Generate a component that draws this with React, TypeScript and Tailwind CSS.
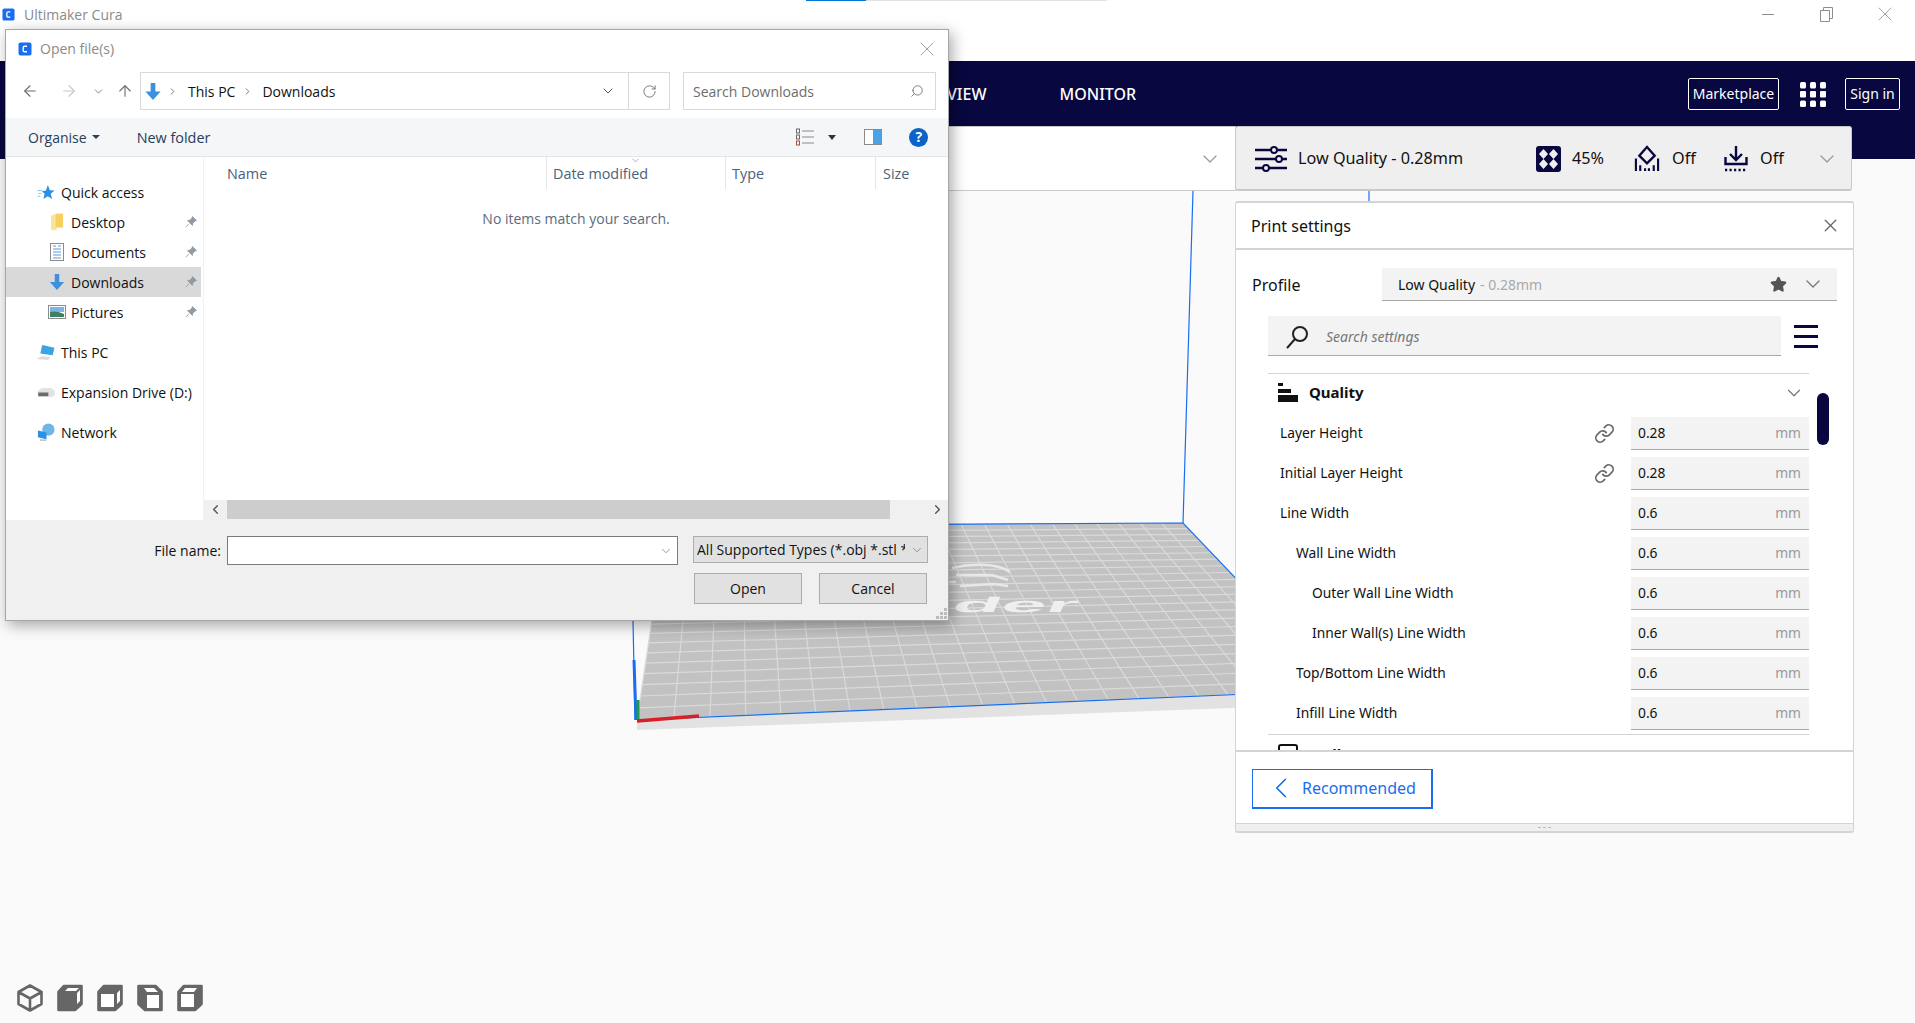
import {
  ArrowLeft,
  ArrowRight,
  ArrowUp,
  ChevronDown,
  ChevronLeft,
  ChevronRight,
  ChevronUp,
  Link,
  RotateCw,
  Search,
  Star,
  X,
} from "lucide-react";

const NAVY = "#08073f";

function CuraLogo({ className }: { className: string }) {
  return (
    <svg viewBox="0 0 14 14" className={className}>
      <rect x="0.5" y="0.5" width="13" height="13" rx="2" fill="#196ef0" />
      <path d="M9 4.2H6.6c-.9 0-1.4.5-1.4 1.3v3c0 .8.5 1.3 1.4 1.3H9" fill="none" stroke="#fff" strokeWidth="1.4" />
    </svg>
  );
}

function DownArrow({ className }: { className: string }) {
  return (
    <svg viewBox="0 0 16 18" className={className}>
      <path d="M5.5 0h5v9H16l-8 9-8-9h5.500z" fill="#3d8fe0" />
    </svg>
  );
}

function Pin() {
  return (
    <svg viewBox="0 0 12 12" className="h-3 w-3 shrink-0">
      <path d="M7.500 0.500 11.500 4.500 10 5 7.800 7.200 7.400 9.500 2.500 4.600 4.800 4.200 7 2z M4 7.800 0.800 11.200" fill="#8f9aa3" stroke="#8f9aa3" strokeWidth="0.8" />
    </svg>
  );
}

function SideIcon({ kind }: { kind: string }) {
  if (kind === "star")
    return (
      <svg viewBox="0 0 18 18" className="h-[17px] w-[18px]">
        <path d="M11 1l2 5.500 5 .3-4 3.500 1.400 5.700-4.600-3-4.600 3 1.400-5.700-3-2.500 4.300-.8z" fill="#2b8fe3" />
        <path d="M0 7h5M1 10h3M0 13h3" stroke="#7cc0ee" strokeWidth="1" />
      </svg>
    );
  if (kind === "folder")
    return (
      <svg viewBox="0 0 14 18" className="h-[18px] w-[13px]">
        <path d="M0 2 6 0v18H2l-2-1z" fill="#fbe39a" />
        <path d="M5 0h8v15H5z" fill="#f7cf63" />
      </svg>
    );
  if (kind === "doc")
    return (
      <svg viewBox="0 0 14 18" className="h-[18px] w-[14px]">
        <rect x="0.500" y="0.500" width="13" height="17" fill="#fff" stroke="#8b8b8b" />
        <path d="M3 3h3M8 3h3M3 6h8M3 9h8M3 12h8M3 15h8" stroke="#5b9bd5" strokeWidth="1" />
      </svg>
    );
  if (kind === "down") return <DownArrow className="h-[16px] w-[16px]" />;
  if (kind === "pic")
    return (
      <svg viewBox="0 0 18 14" className="h-[14px] w-[18px]">
        <rect x="0.500" y="0.500" width="17" height="13" fill="#fff" stroke="#8b8b8b" />
        <rect x="2" y="2" width="14" height="5" fill="#7fb4e6" />
        <path d="M2 7c3-1 8-1 14 2v3H2z" fill="#3f7f64" />
      </svg>
    );
  if (kind === "pc")
    return (
      <svg viewBox="0 0 20 18" className="h-[17px] w-[20px]">
        <path d="M6 1l13 3-2 8-13-2z" fill="#3ba3e6" />
        <path d="M0 16l5-3 10 1-3 3z" fill="#dcdcdc" />
      </svg>
    );
  if (kind === "drive")
    return (
      <svg viewBox="0 0 20 12" className="h-[11px] w-[19px]">
        <path d="M0 5 5 1h10l4 3v5l-3 2H1z" fill="#e2e2e2" />
        <path d="M1 6h11v4H1z" fill="#6b6b6b" />
      </svg>
    );
  return (
    <svg viewBox="0 0 20 20" className="h-[19px] w-[19px]">
      <circle cx="12" cy="7" r="6.500" fill="#6fb6e8" />
      <path d="M1 8l9 2v7l-9-2z" fill="#2b8fe3" />
      <path d="M3 18h7" stroke="#bbb" strokeWidth="1.500" />
    </svg>
  );
}

type SideRow = { label: string; icon: string; pinned?: boolean; selected?: boolean; gap?: string; indent?: boolean };

const sideRows: SideRow[] = [
  { label: "Quick access", icon: "star" },
  { label: "Desktop", icon: "folder", pinned: true, indent: true },
  { label: "Documents", icon: "doc", pinned: true, indent: true },
  { label: "Downloads", icon: "down", pinned: true, selected: true, indent: true },
  { label: "Pictures", icon: "pic", pinned: true, indent: true },
  { label: "This PC", icon: "pc", gap: "mt-[10px]" },
  { label: "Expansion Drive (D:)", icon: "drive", gap: "mt-[10px]" },
  { label: "Network", icon: "net", gap: "mt-[10px]" },
];

function FileDialog() {
  return (
    <div
      className="absolute left-[5px] top-[29px] z-30 flex h-[592px] w-[944px] flex-col border border-[#a6a6a6] bg-white text-[#111] shadow-[3px_4px_14px_rgba(0,0,0,0.35)]"
      style={{ fontFamily: '"Open Sans", sans-serif' }}
    >
      <div className="flex h-[42px] shrink-0 items-center pb-[5px] pl-[12px] pr-[9px]">
        <CuraLogo className="h-[14px] w-[14px]" />
        <span className="ml-[8px] text-[14px] text-[#8a8a8a]">Open file(s)</span>
        <X className="ml-auto h-[24px] w-[24px] text-[#8d8d8d]" strokeWidth={0.8} />
      </div>

      <div className="flex h-[38px] shrink-0 items-center">
        <div className="flex w-[134px] shrink-0 items-center pl-[15px]">
          <ArrowLeft className="h-[18px] w-[18px] text-[#6f6f6f]" strokeWidth={1.500} />
          <ArrowRight className="ml-[21px] h-[18px] w-[18px] text-[#c8c8c8]" strokeWidth={1.500} />
          <ChevronDown className="ml-[14px] h-[13px] w-[13px] text-[#6f6f6f]" strokeWidth={1.500} />
          <ArrowUp className="ml-[11px] h-[18px] w-[18px] text-[#6f6f6f]" strokeWidth={1.500} />
        </div>
        <div className="flex h-[38px] w-[530px] items-center border border-[#d9d9d9] text-[14px]">
          <DownArrow className="ml-[4px] h-[17px] w-[16px]" />
          <ChevronRight className="ml-[6px] h-[11px] w-[11px] text-[#6f6f6f]" />
          <span className="ml-[10px]">This PC</span>
          <ChevronRight className="ml-[7px] h-[11px] w-[11px] text-[#6f6f6f]" />
          <span className="ml-[9px]">Downloads</span>
          <ChevronDown className="ml-auto mr-[12px] h-[16px] w-[16px] text-[#555]" strokeWidth={1.500} />
          <div className="flex h-full w-[41px] items-center justify-center border-l border-[#d9d9d9]">
            <RotateCw className="h-[15px] w-[15px] text-[#6f6f6f]" strokeWidth={1.500} />
          </div>
        </div>
        <div className="ml-[13px] flex h-[38px] w-[253px] items-center border border-[#d9d9d9] pl-[9px] pr-[11px] text-[14px] text-[#6d6d6d]">
          <span>Search Downloads</span>
          <Search className="ml-auto h-[14px] w-[14px] -scale-x-100 text-[#6f6f6f]" strokeWidth={1.500} />
        </div>
      </div>

      <div className="mt-[8px] flex h-[39px] shrink-0 items-center border-b border-[#e5e5e5] bg-[#f5f6f7] pl-[22px] text-[14px] text-[#26405c]">
        <span>Organise</span>
        <span className="ml-[5px] h-0 w-0 border-x-[4px] border-t-[4px] border-x-transparent border-t-[#26405c]" />
        <span className="ml-[37px] pt-[1px] text-[14.400px]">New folder</span>
        <svg viewBox="0 0 18 18" className="ml-[586px] h-[18px] w-[18px]">
          <path d="M6 3h12M6 9h12M6 15h12" stroke="#8a8a8a" strokeWidth="1" />
          <rect x="0.500" y="1" width="3" height="4" fill="none" stroke="#6a6a6a" />
          <rect x="0.500" y="7" width="3" height="4" fill="none" stroke="#6a6a6a" />
          <rect x="0.500" y="13" width="3" height="4" fill="none" stroke="#b04a3a" />
        </svg>
        <span className="ml-[14px] h-0 w-0 border-x-[4px] border-t-[5px] border-x-transparent border-t-[#333]" />
        <svg viewBox="0 0 18 16" className="ml-[28px] h-[16px] w-[18px]">
          <rect x="0.500" y="0.500" width="17" height="15" fill="#fff" stroke="#8a8a8a" />
          <rect x="9" y="1" width="8" height="14" fill="#4aa3e6" />
        </svg>
        <div className="ml-[27px] flex h-[19px] w-[19px] items-center justify-center rounded-full bg-[#0a63c9] text-[14px] font-bold leading-none text-white">
          ?
        </div>
      </div>

      <div className="flex min-h-0 flex-1">
        <div className="w-[198px] shrink-0 border-r border-[#f2f2f2] pr-[2px] pt-[20px] text-[14px]">
          {sideRows.map((r) => (
            <div key={r.label} className={`flex h-[30px] items-center ${r.gap ?? ""} ${r.selected ? "bg-[#d9d9d9]" : ""}`}>
              <div className={`flex w-[24px] shrink-0 justify-center ${r.indent ? "ml-[39px]" : "ml-[28px]"}`}>
                <SideIcon kind={r.icon} />
              </div>
              <span className={`${r.indent ? "ml-[2px]" : "ml-[3px]"} whitespace-nowrap`}>{r.label}</span>
              {r.pinned && <span className="ml-auto mr-[4px]"><Pin /></span>}
            </div>
          ))}
        </div>
        <div className="flex min-w-0 flex-1 flex-col">
          <div className="relative flex h-[32px] shrink-0 text-[14.400px] text-[#4c607a]">
            <div className="w-[342px] pl-[23px] pt-[6px]">Name</div>
            <div className="w-[179px] border-l border-[#e5e5e5] pl-[6px] pt-[6px]">Date modified</div>
            <div className="w-[150px] border-l border-[#e5e5e5] pl-[6px] pt-[6px]">Type</div>
            <div className="flex-1 border-l border-[#e5e5e5] pl-[7px] pt-[6px]">Size</div>
            <ChevronUp className="absolute left-[426px] top-[-2px] h-[11px] w-[11px] rotate-180 text-[#6f6f6f]" strokeWidth={1.200} />
          </div>
          <div className="flex-1 pt-[19px] text-center text-[14px] text-[#5a6b80]">No items match your search.</div>
          <div className="flex h-[20px] shrink-0 items-center bg-[#f0f0f0] pb-[1px]">
            <ChevronLeft className="ml-[4px] h-[15px] w-[15px] text-[#505050]" strokeWidth={2} />
            <div className="ml-[4px] h-[19px] w-[663px] bg-[#cdcdcd]" />
            <ChevronRight className="ml-auto mr-[3px] h-[15px] w-[15px] text-[#505050]" strokeWidth={2} />
          </div>
        </div>
      </div>

      <div className="relative h-[100px] shrink-0 bg-[#f0f0f0] pt-[16px] text-[14px]">
        <div className="flex items-start">
          <label className="flex h-[29px] w-[215px] items-center justify-end">File name:</label>
          <div className="ml-[6px] flex h-[29px] w-[451px] items-center border border-[#7a7a7a] bg-white">
            <ChevronDown className="ml-auto mr-[4px] h-[14px] w-[14px] text-[#555]" strokeWidth={1} />
          </div>
          <div className="ml-[15px] flex h-[27px] w-[235px] items-center border border-[#adadad] bg-[#e1e1e1] pl-[3px]">
            <span className="w-[208px] overflow-hidden whitespace-nowrap">All Supported Types (*.obj *.stl *.3mf)</span>
            <ChevronDown className="ml-[5px] h-[14px] w-[14px] text-[#555]" strokeWidth={1} />
          </div>
        </div>
        <div className="mt-[8px] flex justify-end gap-[17px] pr-[21px]">
          <button className="h-[31px] w-[108px] border border-[#adadad] bg-[#e1e1e1]">Open</button>
          <button className="h-[31px] w-[108px] border border-[#adadad] bg-[#e1e1e1]">Cancel</button>
        </div>
        <svg viewBox="0 0 11 11" className="absolute bottom-[1px] right-[1px] h-[11px] w-[11px]">
          <path d="M8 0h3v3H8zM4 4h3v3H4zM8 4h3v3H8zM0 8h3v3H0zM4 8h3v3H4zM8 8h3v3H8z" fill="#bcbcbc" />
        </svg>
      </div>
    </div>
  );
}

// perspective map from the unit square to the four plate corners
function plateMapper() {
  const [x0, y0, x1, y1, x2, y2, x3, y3] = [637, 720, 1342, 690, 1183, 523, 666, 526];
  const dx1 = x1 - x2, dx2 = x3 - x2, sx = x0 - x1 + x2 - x3;
  const dy1 = y1 - y2, dy2 = y3 - y2, sy = y0 - y1 + y2 - y3;
  const det = dx1 * dy2 - dx2 * dy1;
  const g = (sx * dy2 - dx2 * sy) / det;
  const h = (dx1 * sy - sx * dy1) / det;
  const a = x1 - x0 + g * x1, b = x3 - x0 + h * x3;
  const d = y1 - y0 + g * y1, e = y3 - y0 + h * y3;
  return (u: number, v: number) => {
    const w = g * u + h * v + 1;
    return [(a * u + b * v + x0) / w, (d * u + e * v + y0) / w];
  };
}

function BuildPlate() {
  const map = plateMapper();
  const cells = Array.from({ length: 23 }, (_, i) => i / 22);
  return (
    <svg viewBox="0 0 1915 1023" className="absolute left-0 top-0 h-[1023px] w-[1915px]">
      <polygon points="637,720 1342,690 1342,704 637,730" fill="#e2e2e2" />
      <polygon points="637,720 1342,690 1183,523 666,526" fill="#c2c2c2" />
      {cells.map((t) => {
        const [ax, ay] = map(t, 0);
        const [bx, by] = map(t, 1);
        const [cx, cy] = map(0, t);
        const [dx, dy] = map(1, t);
        return (
          <g key={t} stroke="#dadada" strokeWidth="1.200">
            <line x1={ax} y1={ay} x2={bx} y2={by} />
            <line x1={cx} y1={cy} x2={dx} y2={dy} />
          </g>
        );
      })}
      <g transform="translate(950 612) skewX(-24) scale(1 0.42)" fill="#efefef">
        <text x="0" y="0" fontFamily="Liberation Sans, sans-serif" fontWeight="700" fontSize="50" textLength="125" lengthAdjust="spacingAndGlyphs">der</text>
      </g>
      <g fill="none" stroke="#e8e8e8" strokeWidth="2.500">
        <path d="M952 568c16-4 44-6 58 4M956 575h36l16 5M960 586l34-2 14 2M948 582h8" />
      </g>
      <g stroke="#196ef0" fill="none" strokeWidth="1.200">
        <path d="M637 720 1342 690" />
        <path d="M666 526 1183 523 1342 690" />
        <path d="M1183 523 1193 191" />
        <path d="M1369 191V201" />
        <path d="M633 620 635 720" />
      </g>
      <path d="M634 660 636 720" stroke="#196ef0" strokeWidth="3" />
      <path d="M638 700V719" stroke="#1f9a4a" strokeWidth="3" />
      <path d="M637 721 699 716" stroke="#d81f26" strokeWidth="3.500" />
    </svg>
  );
}

function ViewCube({ kind }: { kind: number }) {
  const face = "#666";
  const line = { stroke: face, strokeWidth: 2.6, strokeLinejoin: "round" as const, strokeLinecap: "round" as const };
  if (kind === 0)
    return (
      <svg viewBox="0 0 26 28" className="h-[28px] w-[26px]">
        <path d="M13 1.500 24.500 8v12L13 26.500 1.500 20V8z M1.500 8 13 14.500 24.500 8 M13 14.500v12" fill="none" {...line} />
      </svg>
    );
  if (kind === 1)
    return (
      <svg viewBox="0 0 26 28" className="h-[28px] w-[26px]">
        <path d="M7 2h17.500v18L18 26H1.500V8z" fill={face} {...line} />
        <path d="M8 7h11l3-3h-11zM20 9l3-3v11l-3 3z" fill="#fff" />
      </svg>
    );
  if (kind === 2)
    return (
      <svg viewBox="0 0 26 28" className="h-[28px] w-[26px]">
        <path d="M7 2h17.500v18L18 26H1.500V8z" fill={face} {...line} />
        <path d="M4 10h13v13H4zM20 9l3-3v11l-3 3z" fill="#fff" />
      </svg>
    );
  if (kind === 3)
    return (
      <svg viewBox="0 0 26 28" className="h-[28px] w-[26px]">
        <path d="M1.500 2h17L24.500 8v18H8L1.500 20z" fill={face} {...line} />
        <path d="M7 4h10l4 4H10zM10 11h12v13H10z" fill="#fff" />
      </svg>
    );
  return (
    <svg viewBox="0 0 26 28" className="h-[28px] w-[26px]">
      <path d="M7 2h17.500v18L18 26H1.500V8z" fill={face} {...line} />
      <path d="M8 4h12l-3 4H5zM4 10h13v13H4z" fill="#fff" />
    </svg>
  );
}

function PrintSummary() {
  return (
    <div className="flex h-[65px] w-[617px] shrink-0 items-center rounded-[3px] border border-[#c9c9c9] border-b-2 bg-[#efefef] pl-[19px] pt-[1px] text-[16.200px] text-[#111]">
      <svg viewBox="0 0 32 26" className="h-[26px] w-[32px] shrink-0">
        <path d="M0 4h32M0 13h32M0 22h32" stroke={NAVY} strokeWidth="2.400" />
        <circle cx="19" cy="4" r="3" fill="#efefef" stroke={NAVY} strokeWidth="2" />
        <circle cx="24" cy="13" r="3" fill="#efefef" stroke={NAVY} strokeWidth="2" />
        <circle cx="11" cy="22" r="3" fill="#efefef" stroke={NAVY} strokeWidth="2" />
      </svg>
      <span className="ml-[11px] w-[238px] whitespace-nowrap">Low Quality - 0.28mm</span>
      <svg viewBox="0 0 25 26" className="h-[26px] w-[25px] shrink-0">
        <rect width="25" height="26" rx="3" fill={NAVY} />
        <path d="M7.500 3 12 8l-4.500 5L3 8zM17.500 3 22 8l-4.500 5L13 8zM7.500 13 12 18l-4.500 5L3 18zM17.500 13 22 18l-4.500 5L13 18z" fill="#efefef" />
        <path d="M12.500 3v2M12.500 21v2M3 13h2M20 13h2" stroke={NAVY} strokeWidth="1" />
      </svg>
      <span className="ml-[11px] w-[62px]">45%</span>
      <svg viewBox="0 0 26 28" className="h-[27px] w-[26px] shrink-0" fill="none" stroke={NAVY}>
        <path d="M13 2 21 11l-8 8-8-8z" strokeWidth="2.400" />
        <path d="M1.500 14v13M6 21v6M11 24v3M15 24v3M20 21v6M24.500 14v13" strokeWidth="2.200" />
      </svg>
      <span className="ml-[12px] w-[52px]">Off</span>
      <svg viewBox="0 0 24 27" className="h-[27px] w-[24px] shrink-0" fill="none" stroke={NAVY} strokeWidth="2.400">
        <path d="M12 1v13M6 9l6 6 6-6" />
        <path d="M1.500 12v7h21v-7" />
        <path d="M1 25h22" strokeDasharray="2.200 2.300" />
      </svg>
      <span className="ml-[12px]">Off</span>
      <ChevronDown className="ml-auto mr-[12px] h-[24px] w-[24px] text-[#9a9a9a]" strokeWidth={1.300} />
    </div>
  );
}

const settingRows = [
  { label: "Layer Height", value: "0.28", indent: "pl-[12px]", linked: true },
  { label: "Initial Layer Height", value: "0.28", indent: "pl-[12px]", linked: true },
  { label: "Line Width", value: "0.6", indent: "pl-[12px]" },
  { label: "Wall Line Width", value: "0.6", indent: "pl-[28px]" },
  { label: "Outer Wall Line Width", value: "0.6", indent: "pl-[44px]" },
  { label: "Inner Wall(s) Line Width", value: "0.6", indent: "pl-[44px]" },
  { label: "Top/Bottom Line Width", value: "0.6", indent: "pl-[28px]" },
  { label: "Infill Line Width", value: "0.6", indent: "pl-[28px]" },
];

function PrintSettings() {
  return (
    <div className="mt-[10px] flex h-[632px] w-[619px] flex-col overflow-hidden rounded-[3px] border border-t-2 border-b-2 border-[#d4d4d4] bg-white text-[#111]">
      <div className="flex h-[47px] shrink-0 items-center border-b-2 border-[#d4d4d4] pl-[15px] pr-[12px]">
        <span className="text-[16px]">Print settings</span>
        <X className="ml-auto h-[21px] w-[21px] text-[#666]" strokeWidth={1.500} />
      </div>

      <div className="flex shrink-0 items-center pl-[16px] pt-[18px]">
        <span className="w-[130px] text-[16px]">Profile</span>
        <div className="flex h-[33px] w-[455px] items-center border-b border-[#a9a9a9] bg-[#f3f3f3] pl-[16px] text-[14px]">
          <span>Low Quality</span>
          <span className="ml-[5px] text-[#a9a9a9]">- 0.28mm</span>
          <Star className="ml-auto h-[17px] w-[17px] fill-[#555] text-[#555]" />
          <ChevronDown className="ml-[14px] mr-[12px] h-[24px] w-[24px] text-[#777]" strokeWidth={1.300} />
        </div>
      </div>

      <div className="flex shrink-0 items-center pl-[32px] pt-[15px]">
        <div className="flex h-[40px] w-[513px] items-center border-b border-[#a9a9a9] bg-[#f3f3f3] pl-[17px] pt-[2px] text-[14px] italic text-[#777]">
          <svg viewBox="0 0 24 24" className="h-[24px] w-[24px] shrink-0" fill="none" stroke="#222" strokeWidth="2">
            <circle cx="15" cy="9" r="7" />
            <path d="M10 14 2.500 22.500" strokeLinecap="round" />
          </svg>
          <span className="ml-[17px]">Search settings</span>
        </div>
        <svg viewBox="0 0 24 23" className="ml-[13px] h-[23px] w-[24px]">
          <path d="M0 1.500h24M0 11.500h24M0 21.500h24" stroke={NAVY} strokeWidth="3" />
        </svg>
      </div>

      <div className="relative mt-[17px] min-h-0 flex-1 overflow-hidden pl-[32px]">
        <div className="w-[541px]">
          <div className="flex h-[44px] items-center border-t border-[#d4d4d4] pb-[6px]">
            <svg viewBox="0 0 20 19" className="ml-[10px] h-[19px] w-[20px]">
              <path d="M0 0h5v3H0zM0 6h13v4H0zM0 12h20v7H0z" fill="#111" />
            </svg>
            <span className="ml-[11px] text-[15px] font-bold">Quality</span>
            <ChevronDown className="ml-auto mr-[4px] h-[22px] w-[22px] text-[#777]" strokeWidth={1.300} />
          </div>
          {settingRows.map((r) => (
            <div key={r.label} className="mb-[7px] flex h-[33px] items-center text-[13.800px]">
              <div className={`flex-1 ${r.indent}`}>
                {r.label}
              </div>
              {r.linked && <Link className="mr-[16px] h-[21px] w-[21px] text-[#6a6a6a]" strokeWidth={2} />}
              <div className="flex h-[33px] w-[178px] items-center justify-between border-b border-[#a9a9a9] bg-[#f3f3f3] pl-[7px] pr-[8px]">
                <span>{r.value}</span>
                <span className="text-[#999]">mm</span>
              </div>
            </div>
          ))}
          <div className="-mt-[3px] flex h-[30px] items-start border-t border-[#d4d4d4] pt-[9px]">
            <svg viewBox="0 0 20 20" className="ml-[10px] h-[20px] w-[20px]">
              <rect x="1" y="1" width="18" height="18" rx="2" fill="none" stroke="#111" strokeWidth="2" />
              <path d="M4 7h2M9 7h2M14 7h2" stroke="#111" strokeWidth="2" />
            </svg>
            <span className="-mt-[1px] ml-[11px] text-[15px] font-bold">Walls</span>
          </div>
        </div>
        <div className="absolute right-[24px] top-[20px] h-[52px] w-[12px] rounded-full" style={{ backgroundColor: NAVY }} />
      </div>

      <div className="flex h-[73px] shrink-0 items-center border-t-2 border-[#d4d4d4] pl-[16px] pt-[2px]">
        <button className="flex h-[40px] w-[181px] items-center border border-r-2 border-b-2 border-[#196ef0] pl-[22px] text-[16px] text-[#196ef0]">
          <ChevronLeft className="-ml-[11px] h-[34px] w-[34px] shrink-0" strokeWidth={1.200} />
          <span className="ml-[4px]">Recommended</span>
        </button>
      </div>

      <div className="flex h-[8px] shrink-0 items-center justify-center gap-[2px] border-t border-[#d4d4d4] bg-[#efefef]">
        <span className="h-[1px] w-[3px] bg-[#bbb]" />
        <span className="h-[1px] w-[3px] bg-[#bbb]" />
        <span className="h-[1px] w-[3px] bg-[#bbb]" />
      </div>
    </div>
  );
}

export default function App() {
  return (
    <div className="relative flex h-[1023px] w-[1915px] flex-col overflow-hidden bg-[#fafafa]" style={{ fontFamily: '"Noto Sans", sans-serif' }}>
      <div className="flex h-[61px] shrink-0 items-start bg-white">
        <CuraLogo className="ml-[2px] mt-[8px] h-[13px] w-[13px]" />
        <span className="ml-[9px] mt-[4px] text-[14px] text-[#8b8b8b]" style={{ fontFamily: '"Open Sans", sans-serif' }}>Ultimaker Cura</span>
        <div className="ml-auto mt-[14px] h-[1px] w-[12px] bg-[#8d8d8d]" />
        <svg viewBox="0 0 13 15" className="ml-[46px] mt-[7px] h-[15px] w-[13px]" fill="none" stroke="#8d8d8d">
          <path d="M0.500 3.500h9v11h-9zM3.500 3.500v-3h9v11h-3" />
        </svg>
        <X className="ml-[40px] mr-[18px] mt-[2px] h-[24px] w-[24px] text-[#8d8d8d]" strokeWidth={0.8} />
      </div>
      <div className="absolute left-[806px] top-0 flex h-[1px] w-[301px] bg-[#e2e2e2]">
        <div className="h-[1px] w-[60px] bg-[#0078d7]" />
      </div>

      <div className="flex h-[98px] shrink-0 items-start text-white" style={{ backgroundColor: NAVY }}>
        <span className="ml-[947px] mt-[21px] text-[16px] font-medium">VIEW</span>
        <span className="ml-[73px] mt-[21px] text-[16px] font-medium">MONITOR</span>
        <div className="ml-auto mt-[17px] flex h-[32px] w-[91px] items-center justify-center rounded-[2px] border border-white pb-[2px] text-[14px]">Marketplace</div>
        <svg viewBox="0 0 26 25" className="ml-[21px] mt-[21px] h-[25px] w-[26px]" fill="#fff">
          <rect width="6" height="6.500" rx="1.500" />
          <rect x="10" width="6" height="6.500" rx="1.500" />
          <rect x="20" width="6" height="6.500" rx="1.500" />
          <rect y="9" width="6" height="6.500" rx="1" />
          <rect x="10" y="9" width="6" height="6.500" rx="1" />
          <rect x="20" y="9" width="6" height="6.500" rx="1" />
          <rect y="18.500" width="6" height="6.500" rx="1.500" />
          <rect x="10" y="18.500" width="6" height="6.500" rx="1.500" />
          <rect x="20" y="18.500" width="6" height="6.500" rx="1.500" />
        </svg>
        <div className="ml-[19px] mr-[15px] mt-[17px] flex h-[32px] w-[55px] items-center justify-center rounded-[2px] border border-white pb-[2px] text-[14px]">Sign in</div>
      </div>

      <BuildPlate />

      <div className="absolute left-[948px] top-[126px] z-10 flex h-[65px] w-[288px] items-center justify-end border-y border-[#c9c9c9] bg-white pr-[14px]">
        <ChevronDown className="h-[24px] w-[24px] text-[#9a9a9a]" strokeWidth={1.300} />
      </div>

      <div className="absolute left-[1235px] top-[126px] z-20 flex flex-col">
        <PrintSummary />
        <PrintSettings />
      </div>

      <FileDialog />

      <div className="mt-auto flex gap-[14px] pb-[11px] pl-[17px]">
        {[0, 1, 2, 3, 4].map((k) => (
          <ViewCube key={k} kind={k} />
        ))}
      </div>
    </div>
  );
}
